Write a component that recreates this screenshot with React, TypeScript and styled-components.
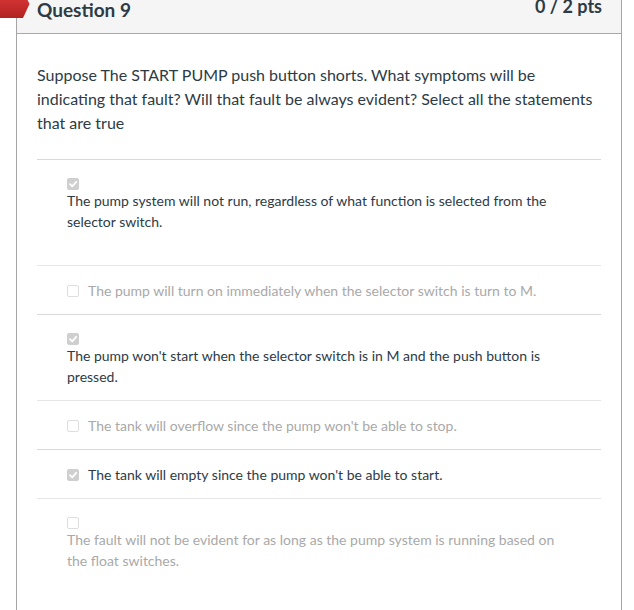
import styled, { createGlobalStyle } from "styled-components";

type AnswerData = {
  text: string;
  selected: boolean;
  stacked: boolean;
  extra?: number;
};

const answers: AnswerData[] = [
  {
    text: "The pump system will not run, regardless of what function is selected from the selector switch.",
    selected: true,
    stacked: true,
    extra: 20,
  },
  {
    text: "The pump will turn on immediately when the selector switch is turn to M.",
    selected: false,
    stacked: false,
  },
  {
    text: "The pump won't start when the selector switch is in M and the push button is pressed.",
    selected: true,
    stacked: true,
  },
  {
    text: "The tank will overflow since the pump won't be able to stop.",
    selected: false,
    stacked: false,
  },
  {
    text: "The tank will empty since the pump won't be able to start.",
    selected: true,
    stacked: false,
  },
  {
    text: "The fault will not be evident for as long as the pump system is running based on the float switches.",
    selected: false,
    stacked: true,
  },
];

const Checkbox = ({ checked, stacked }: { checked: boolean; stacked: boolean }) => (
  <Box $checked={checked} $stacked={stacked}>
    {checked && (
      <svg width="10" height="10" viewBox="0 0 10 10">
        <path
          d="M2 5.2 L4.2 7.3 L8.2 2.8"
          fill="none"
          stroke="#fff"
          strokeWidth="1.8"
          strokeLinecap="round"
          strokeLinejoin="round"
        />
      </svg>
    )}
  </Box>
);

const Answer = ({ text, selected, stacked, extra }: AnswerData) => (
  <AnswerRow $stacked={stacked} $extra={extra ?? 0} $selected={selected}>
    <Checkbox checked={selected} stacked={stacked} />
    <AnswerText $selected={selected}>{text}</AnswerText>
  </AnswerRow>
);

const App = () => {
  return (
    <>
      <GlobalStyle />
      <Page>
        <Flag width="30" height="18" viewBox="0 0 30 18">
          <defs>
            <linearGradient id="flagFill" x1="0" y1="0" x2="0" y2="1">
              <stop offset="0" stopColor="#e23b3b" />
              <stop offset="1" stopColor="#b22222" />
            </linearGradient>
          </defs>
          <polygon points="0,-10 23,-10 29.5,4 23,18 0,18" fill="url(#flagFill)" />
        </Flag>
        <Card>
          <Header>
            <Title>Question 9</Title>
            <Points>0 / 2 pts</Points>
          </Header>
          <Body>
            <QuestionText>
              Suppose The START PUMP push button shorts. What symptoms will be
              indicating that fault? Will that fault be always evident? Select
              all the statements that are true
            </QuestionText>
            <AnswerList>
              {answers.map((a, i) => (
                <Answer key={i} {...a} />
              ))}
            </AnswerList>
          </Body>
        </Card>
      </Page>
    </>
  );
};

export default App;

const GlobalStyle = createGlobalStyle`
  html, body {
    margin: 0;
    padding: 0;
    background: #fff;
  }
  body {
    font-family: Lato, "Helvetica Neue", Arial, sans-serif;
    color: #2d3b45;
  }
`;

const Page = styled.div`
  position: relative;
  width: 634px;
  height: 610px;
  overflow: hidden;
`;

const Flag = styled.svg`
  position: absolute;
  left: 0;
  top: 0;
  z-index: 2;
`;

const Card = styled.div`
  margin-left: 16px;
  width: 606px;
  min-height: 610px;
  box-sizing: border-box;
  border-left: 1px solid #a5a5a5;
  border-right: 1px solid #a5a5a5;
  background: #fff;
`;

const Header = styled.div`
  display: flex;
  justify-content: space-between;
  align-items: flex-start;
  height: 33px;
  padding: 0 19px 0 20px;
  background: #f5f5f5;
  border-bottom: 1px solid #a9a9a9;
  overflow: hidden;
`;

const Title = styled.h2`
  margin: -2px 0 0;
  font-size: 19px;
  font-weight: 700;
  line-height: 23px;
  color: #2d3b45;
`;

const Points = styled.div`
  margin-top: -4px;
  font-size: 18px;
  font-weight: 700;
  line-height: 21.6px;
  color: #2d3b45;
`;

const Body = styled.div`
  padding: 29px 20px 0;
`;

const QuestionText = styled.p`
  margin: 0 0 24px;
  font-size: 16px;
  line-height: 24px;
  color: #2d3b45;
`;

const AnswerList = styled.div`
  display: flex;
  flex-direction: column;
`;

const AnswerRow = styled.div<{ $stacked: boolean; $extra: number; $selected: boolean }>`
  display: flex;
  flex-direction: ${(p) => (p.$stacked ? "column" : "row")};
  align-items: ${(p) => (p.$stacked ? "flex-start" : "center")};
  gap: ${(p) => (p.$stacked ? "0" : "9px")};
  padding: 14px 30px ${(p) => 13 + p.$extra}px;
  border-top: 1px solid ${(p) => (p.$selected ? "#d9d9d9" : "#e6e6e6")};
`;

const Box = styled.span<{ $checked: boolean; $stacked: boolean }>`
  display: flex;
  align-items: center;
  justify-content: center;
  flex: none;
  width: 12px;
  height: 12px;
  margin-top: ${(p) => (p.$stacked ? "4px" : "0")};
  box-sizing: border-box;
  border-radius: 2px;
  border: 1px solid ${(p) => (p.$checked ? "#cfcfcf" : "#dedede")};
  background: ${(p) => (p.$checked ? "#cfcfcf" : "#fff")};
`;

const AnswerText = styled.div<{ $selected: boolean }>`
  font-size: 14px;
  font-weight: 400;
  line-height: 21px;
  color: ${(p) => (p.$selected ? "#2d3b45" : "#a9a9a9")};
`;
